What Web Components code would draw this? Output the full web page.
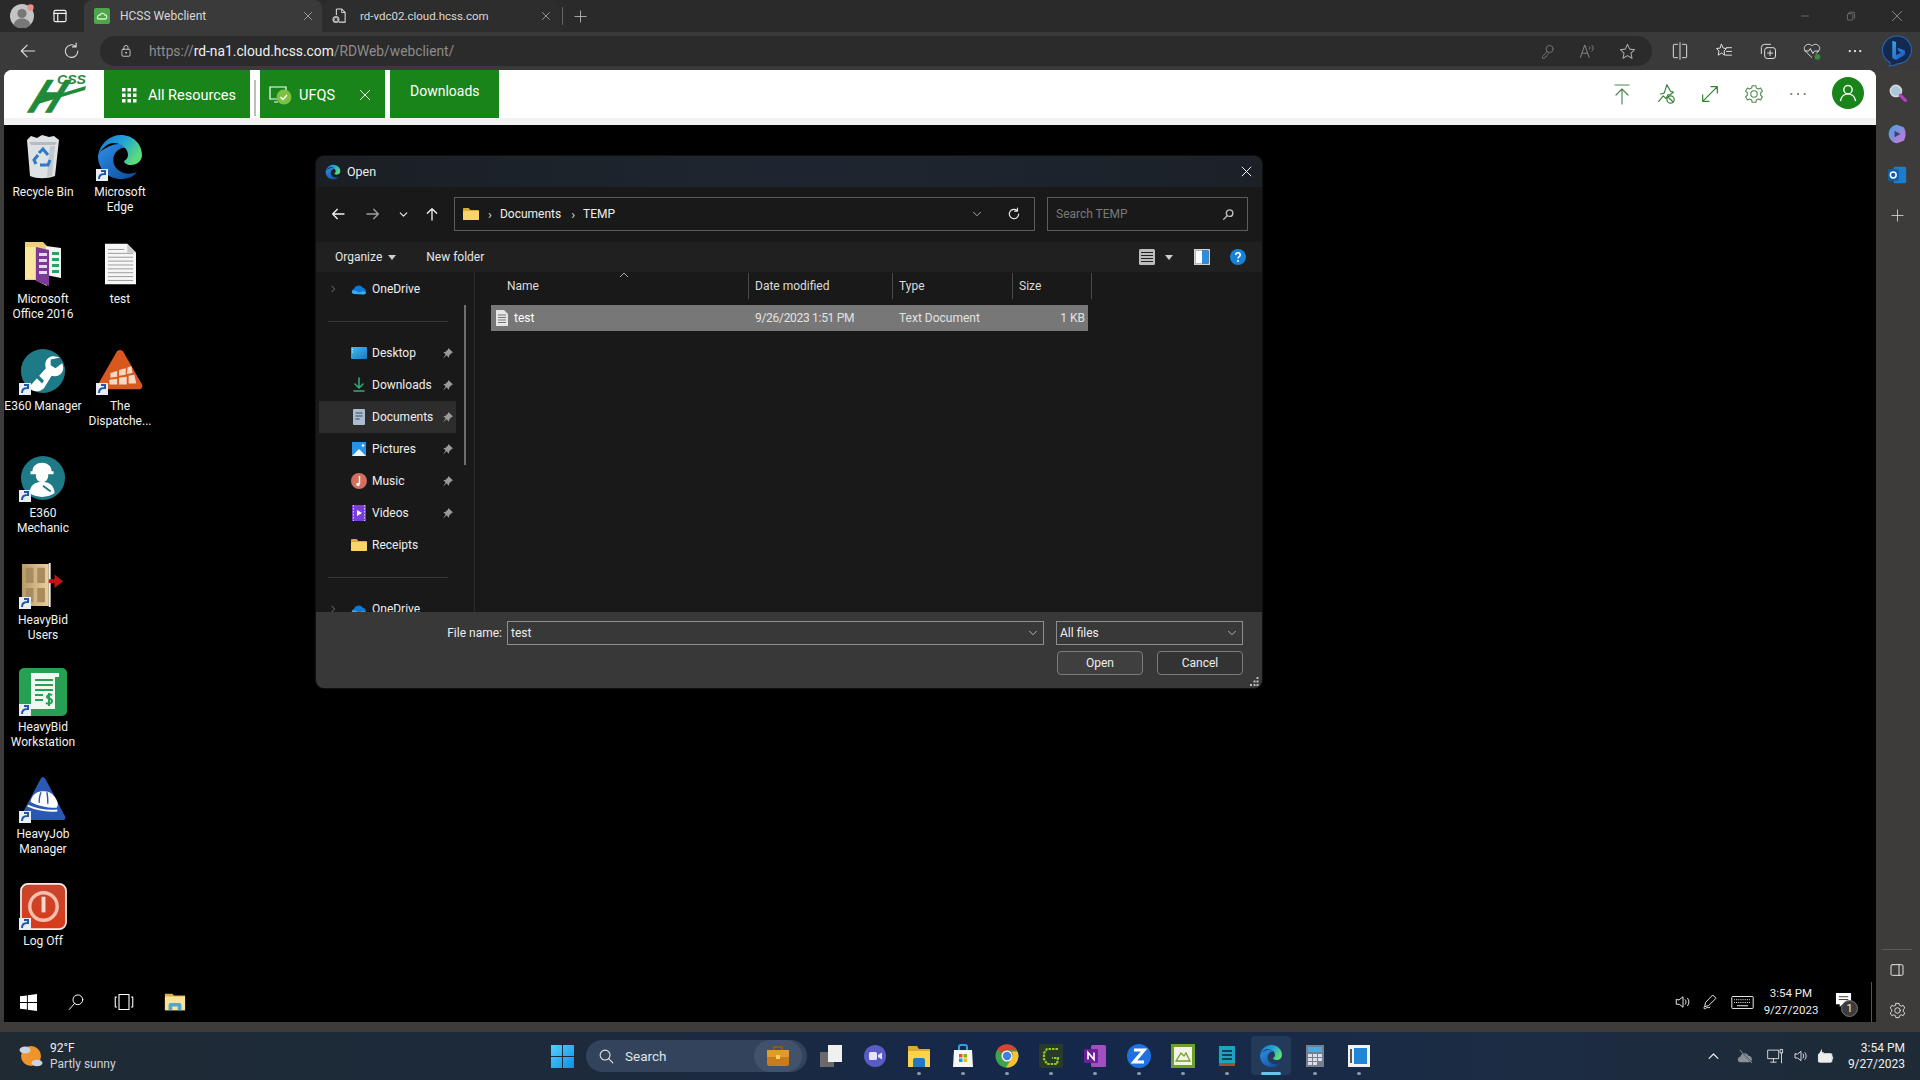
<!DOCTYPE html>
<html lang="en"><head><meta charset="utf-8"><title>HCSS Webclient</title>
<style>
html,body{margin:0;padding:0;width:1920px;height:1080px;overflow:hidden;background:#000;font-family:Roboto,"Liberation Sans",sans-serif}
</style></head><body>
<app-root></app-root>
<script>
const edge=(id)=>`<svg viewBox="0 0 48 48"><defs><linearGradient id="${id}a" x1="0" y1="0" x2="1" y2=".5"><stop offset="0" stop-color="#1678d4"/><stop offset=".55" stop-color="#21a3d8"/><stop offset="1" stop-color="#5bdc7a"/></linearGradient><linearGradient id="${id}b" x1="0" y1="0" x2="1" y2="1"><stop offset="0" stop-color="#2f8fe6"/><stop offset="1" stop-color="#0b4a9c"/></linearGradient></defs><path fill="url(#${id}b)" d="M2 23c0 13 10 23 23 23 7 0 12-2 16-7-7 3-15 2-20-3-5-5-5-13 0-18 3-3 7-4 11-3-4-5-12-5-18-2-6 3-11 5-12 10z"/><path fill="url(#${id}a)" d="M2 23C4 10 14 2 25 2c12 0 21 9 21 20 0 6-5 10-11 10-4 0-7-2-7-4 2-1 4-3 4-6 0-7-7-12-14-12C11 10 5 16 2 23z"/></svg>`;
const s=(d,c='#ddd',w=1.4,vb=24)=>`<svg viewBox="0 0 ${vb} ${vb}" fill="none" stroke="${c}" stroke-width="${w}" stroke-linecap="round" stroke-linejoin="round">${d}</svg>`;
const ICONS={
fold:`<svg viewBox="0 0 16 16"><path fill="#d9a93a" d="M0 3c0-.6.4-1 1-1h4.500l2 2H15c.6 0 1 .4 1 1v8c0 .6-.4 1-1 1H1c-.6 0-1-.4-1-1z"/><path fill="#fbd466" d="M0 6c0-.6.4-1 1-1h14c.6 0 1 .4 1 1v7c0 .6-.4 1-1 1H1c-.6 0-1-.4-1-1z"/></svg>`,
avatar:`<svg viewBox="0 0 24 24"><circle cx="12" cy="12" r="12" fill="#c4c4c4"/><circle cx="12" cy="9.500" r="4.600" fill="#777"/><path fill="#777" d="M3.500 21c1-5 5-6.500 8.500-6.500S19.500 16 20.500 21A12 12 0 0 1 3.500 21z"/><circle cx="20.500" cy="3.500" r="3.200" fill="#e98d8d"/></svg>`,
sidetabs:s('<rect x="4" y="4.500" width="16" height="15" rx="2"/><path d="M4 8.500h16M9 8.500v11"/>','#eee',1.6),
favicon:`<svg viewBox="0 0 16 16"><rect width="16" height="16" rx="2" fill="#4fa54a"/><path fill="none" stroke="#d8f0c8" stroke-width="1.300" d="M4 11c-1.500-2 0-4 2-4 .5-2 4-2.500 5 0 2 0 2.500 3 .5 4z"/></svg>`,
docx:`<svg viewBox="0 0 16 18"><path fill="none" stroke="#ddd" stroke-width="1.200" d="M5 1h6l4 4v11H8M5 1v7"/><path fill="none" stroke="#ddd" d="M11 1v4h4"/><circle cx="4.500" cy="13" r="4" fill="#bbb"/><path stroke="#222" stroke-width="1.200" d="M3 11.500l3 3m0-3l-3 3"/></svg>`,
x:s('<path d="M5 5l14 14M19 5L5 19"/>','#cfcfcf',1.3),
xw:s('<path d="M5 5l14 14M19 5L5 19"/>','#fff',1.5),
plus:s('<path d="M12 3v18M3 12h18"/>','#cfcfcf',1.2),
min:s('<path d="M6 12h12"/>','#8a8a8a',1.1),
restore:s('<rect x="6" y="8" width="9" height="11" rx="1.500"/><path d="M9 5.500h7.500A1.500 1.500 0 0 1 18 7v9"/>','#8a8a8a',1.1),
closew:s('<path d="M4 4l16 16M20 4L4 20"/>','#a8a8a8',1.2),
back:s('<path d="M20 12H4M11 5l-7 7 7 7"/>','#ddd',1.300),
reload:s('<path d="M19 12a7.500 7.500 0 1 1-2.500-5.500M17 2.500v4.500h-4.500"/>','#ddd',1.300),
lock:s('<rect x="5" y="9" width="14" height="12" rx="2"/><path d="M8.500 9V6a3.500 3.500 0 0 1 7 0v3"/><circle cx="12" cy="15" r=".8" fill="#ddd"/>','#ddd',1.400),
key:s('<circle cx="15" cy="8.500" r="5"/><path d="M11.500 12L5 19v2.500h3l1-2h1.500l.5-2 2.500-2.500"/>','#777',1.300),
read:`<svg viewBox="0 0 24 24" fill="none" stroke="#888" stroke-width="1.300"><path d="M3 21L9 4l6 17M5.500 15h7"/><path d="M15 6c1.500 1 1.500 3 0 4M18 4c3 2.500 3 6 0 8.500"/></svg>`,
star:s('<path d="M12 3l2.800 6 6.200.7-4.600 4.300 1.300 6.500L12 17.200 6.300 20.500l1.300-6.500L3 9.700 9.200 9z"/>','#aaa',1.300),
split:s('<path d="M9 4H5a1 1 0 0 0-1 1v14a1 1 0 0 0 1 1h4M15 4h4a1 1 0 0 1 1 1v14a1 1 0 0 1-1 1h-4M12 2v20"/>','#ddd',1.200),
favs:s('<path d="M9 4l2 4.500 4 .5-3 3 1 5-4-2.500L5 17l1-5-3-3 4-.5zM15 8h6M15 12.500h6M14 17h7"/>','#ddd',1.200),
coll:s('<path d="M15 4H8a4 4 0 0 0-4 4v7"/><rect x="8" y="8" width="13" height="13" rx="3"/><path d="M14.500 11.500v6M11.500 14.500h6"/>','#ddd',1.200),
heart:`<svg viewBox="0 0 24 24" fill="none" stroke="#ddd" stroke-width="1.200"><path d="M12 20L4 12C1 8 4 4 8 4c2 0 3 1 4 2 1-1 2-2 4-2 4 0 7 4 4 8l-3 3"/><path d="M3 12h5l2-3 3 6 2-3h5"/><circle cx="18.500" cy="19" r="3.500" fill="#3c8a3c" stroke="none"/></svg>`,
dots:`<svg viewBox="0 0 24 24" fill="#eee"><circle cx="5" cy="12" r="1.500"/><circle cx="12" cy="12" r="1.500"/><circle cx="19" cy="12" r="1.500"/></svg>`,
bing:`<svg viewBox="0 0 32 34"><defs><linearGradient id="bg" x1="0" y1="0" x2="1" y2="1"><stop offset="0" stop-color="#37a8e8"/><stop offset="1" stop-color="#1a4fc4"/></linearGradient></defs><path d="M16 1a15 15 0 0 1 13 23c-2 4-6 6-13 7-3 1-5 2-8 2 1-1 1-3 0-4A15 15 0 0 1 16 1z" fill="#13294f" stroke="#2a63a8" stroke-width="1.200"/><path fill="url(#bg)" d="M11 6l4 1.500v14l5.500-3-2.500-1-1.500-4 8 3v4.500l-9.500 5.500-4-2z"/></svg>`,
grid:`<svg viewBox="0 0 15 15" fill="#fff">${[0,5.5,11].flatMap(x=>[0,5.5,11].map(y=>`<rect x="${x}" y="${y}" width="3.500" height="3.500"/>`)).join('')}</svg>`,
ufqs:`<svg viewBox="0 0 24 20"><path fill="none" stroke="#fff" stroke-width="1.200" d="M8 14H1V2h16v5M5 17h4"/><circle cx="15" cy="12" r="7.500" fill="#7cc044"/><path fill="none" stroke="#fff" stroke-width="1.500" d="M11.500 12l2.500 2.500 4-4.500"/></svg>`,
hUp:s('<path d="M5 3h14M12 7v15M6 13l6-6 6 6"/>','#4f8a4f',1.200),
hPin:s('<path d="M13 2l4 7 3 1-4 3-2 0-2 4-3-3-5 6M6 12l4-1 3-9"/><circle cx="17" cy="18" r="4"/><path d="M14.500 15.500l5 5"/>','#3f7f3f',1.300),
hExp:s('<path d="M4 20L20 4M13 4h7v7M4 13v7h7"/>','#2f862f',1.300),
gear:s('<circle cx="12" cy="12" r="3.500"/><path d="M10 3h4l.6 2.500 2.200 1 2.400-1 2 3.400-1.900 1.700v2.800l1.900 1.700-2 3.400-2.400-1-2.200 1L14 21h-4l-.6-2.500-2.200-1-2.400 1-2-3.400 1.900-1.700v-2.800L2.800 8.900l2-3.400 2.400 1 2.200-1z"/>','#4f8a4f',1.200),
gearw:s('<circle cx="12" cy="12" r="3.500"/><path d="M10 3h4l.6 2.500 2.200 1 2.400-1 2 3.400-1.900 1.700v2.800l1.900 1.700-2 3.400-2.400-1-2.200 1L14 21h-4l-.6-2.500-2.200-1-2.400 1-2-3.400 1.900-1.700v-2.800L2.800 8.900l2-3.400 2.400 1 2.200-1z"/>','#ddd',1.200),
dotsg:`<svg viewBox="0 0 24 24" fill="#4f8a4f"><circle cx="4" cy="12" r="1.300"/><circle cx="12" cy="12" r="1.300"/><circle cx="20" cy="12" r="1.300"/></svg>`,
user:s('<circle cx="12" cy="8" r="5"/><path d="M3 21c1-5 5-8 9-8s8 3 9 8"/>','#fff',1.700),
sMag:`<svg viewBox="0 0 24 24"><circle cx="10" cy="10" r="7" fill="#a9c7d9" stroke="#d8d8d8" stroke-width="2"/><path stroke="#b43fc4" stroke-width="4" stroke-linecap="round" d="M15.500 15.500L22 22"/></svg>`,
sCop:`<svg viewBox="0 0 24 24"><defs><linearGradient id="cp" x1="0" y1="0" x2="1" y2="1"><stop offset="0" stop-color="#3aa8e0"/><stop offset="1" stop-color="#d673d6"/></linearGradient></defs><path fill="url(#cp)" d="M12 1l8 3c3 4 3 12 0 16l-8 3c-5 0-10-5-10-11S7 1 12 1z"/><path fill="#4a3a78" d="M9 8l7 4-7 4z"/></svg>`,
sOut:`<svg viewBox="0 0 24 24"><rect x="8" y="2" width="15" height="20" rx="2" fill="#1e7ccc"/><rect x="1" y="5" width="13" height="14" rx="1" fill="#0f5da8"/><circle cx="7.500" cy="12" r="3.500" fill="none" stroke="#fff" stroke-width="1.800"/></svg>`,
plusw:s('<path d="M12 3v18M3 12h18"/>','#ddd',1.300),
panel:s('<rect x="3" y="4" width="18" height="16" rx="2"/><path d="M15 4v16"/>','#eee',1.400),
winw:`<svg viewBox="0 0 18 18" fill="#fff"><path d="M0 2.500l7.300-1v7H0zM8.300 1.300L18 0v8.500H8.300zM0 9.500h7.300v7L0 15.500zM8.300 9.500H18V18l-9.700-1.300z"/></svg>`,
searchw:s('<circle cx="14.500" cy="9" r="6.500"/><path d="M10 14l-7 8"/>','#fff',1.300),
taskv:s('<rect x="6" y="3" width="12" height="18"/><path d="M3 6H1.500v12H3M21 6h1.500v12H21"/>','#fff',1.300),
explorer:`<svg viewBox="0 0 24 24"><path fill="#d8b04a" d="M1 3h8l2 2h12v16H1z"/><path fill="#fae29a" d="M1 6h22v15H1z"/><path fill="#4fa6cf" d="M5 21v-6c0-1 1-2 2-2h10c1 0 2 1 2 2v6h-4v-4H9v4z"/></svg>`,
vol:s('<path d="M3 9v6h4l5 4V5L7 9zM15 9c1.500 2 1.500 4 0 6M18 7c2.500 3 2.500 7 0 10"/>','#fff',1.200),
pen:s('<path d="M16 3l4 4L10 17l-5 1 1-5zM5 18c-3 3 0 4 2 2 2-2 3 1 5-1"/>','#fff',1.200),
kbd:`<svg viewBox="0 0 24 14" fill="none" stroke="#fff"><rect x=".5" y=".5" width="23" height="13" rx="1"/><path stroke-dasharray="1 1" d="M3 4h18M3 7h18"/><path d="M6 10.500h12"/></svg>`,
note:`<svg viewBox="0 0 18 18"><path fill="#fff" d="M1 1h16v12H8l-3 3v-3H1z"/><path stroke="#333" stroke-width="1" d="M4 5h10M4 8h10"/></svg>`,
weather:`<svg viewBox="0 0 24 24"><circle cx="12" cy="12" r="10" fill="#f0952a"/><ellipse cx="6" cy="6" rx="5.500" ry="3.500" fill="#c9d4e4"/><ellipse cx="18" cy="19" rx="5.500" ry="3.200" fill="#c9d4e4"/></svg>`,
win11:`<svg viewBox="0 0 24 24"><defs><linearGradient id="w11" x1="0" y1="0" x2="1" y2="1"><stop offset="0" stop-color="#52d0fb"/><stop offset="1" stop-color="#0f8fe8"/></linearGradient></defs><path fill="url(#w11)" d="M0 0h11.500v11.500H0zM12.500 0H24v11.500H12.500zM0 12.500h11.500V24H0zM12.500 12.500H24V24H12.500z"/></svg>`,
mag:s('<circle cx="10" cy="10" r="7"/><path d="M15 15l6 6"/>','#e6e6e6',1.500),
brief:`<svg viewBox="0 0 24 24"><rect x="1" y="6" width="22" height="16" rx="2" fill="#c97a1a"/><path fill="none" stroke="#8b5a1a" stroke-width="2" d="M8 6V3h8v3"/><rect x="1" y="6" width="22" height="7" fill="#e49a2a"/><rect x="10" y="11" width="4" height="4" fill="#ffd35a"/></svg>`,
tCopy:`<svg viewBox="0 0 24 24"><rect x="1" y="8" width="14" height="15" fill="#6a6a6a"/><rect x="9" y="1" width="14" height="17" fill="#f0f0f0"/></svg>`,
tMeet:`<svg viewBox="0 0 24 24"><path fill="#5a5bc4" d="M12 1c7 0 11 5 11 11s-4 11-11 11C6 23 1 18 1 12S6 1 12 1z"/><rect x="6" y="8" width="8" height="8" rx="1.500" fill="#e4e4f8"/><path fill="#e4e4f8" d="M15 11l4-2.500v7L15 13z"/></svg>`,
tFold:`<svg viewBox="0 0 24 24"><path fill="#e0a92c" d="M1 2h9l2 3h11v17H1z"/><path fill="#fcd34d" d="M1 7h22v16H1z"/><path fill="#1c7cc0" d="M6 23v-7c0-1 1-2 2-2h8c1 0 2 1 2 2v7z"/></svg>`,
tStore:`<svg viewBox="0 0 24 24"><path fill="none" stroke="#2f9fe0" stroke-width="2" d="M8 6V3c0-1 1-2 2-2h4c1 0 2 1 2 2v3"/><path fill="#f6f6f6" d="M3 6h18l1 17H2z"/><path fill="#f25022" d="M8 10h3.500v3.500H8z"/><path fill="#7fba00" d="M12.500 10H16v3.500h-3.500z"/><path fill="#00a4ef" d="M8 14.500h3.500V18H8z"/><path fill="#ffb900" d="M12.500 14.500H16V18h-3.500z"/></svg>`,
tChrome:`<svg viewBox="0 0 24 24"><circle cx="12" cy="12" r="11.500" fill="#3fa34d"/><path fill="#e0402f" d="M12 .5a11.500 11.500 0 0 1 10 5.800H12a5.700 5.700 0 0 0-5.300 3.400L2.500 5A11.500 11.500 0 0 1 12 .500z"/><path fill="#fbc02d" d="M22.500 7.500A11.500 11.500 0 0 1 11 23.500l5-8a5.700 5.700 0 0 0 .6-8z"/><circle cx="12" cy="12" r="5.500" fill="#fff"/><circle cx="12" cy="12" r="4.200" fill="#3f7fe0"/></svg>`,
tG:`<svg viewBox="0 0 24 24"><rect width="24" height="24" fill="#2a3a2a"/><path fill="none" stroke="#8ecb2a" stroke-width="2.200" stroke-dasharray="2.500 1" d="M19 5H8L5 9v6l3 5h10l1-6h-6"/></svg>`,
tOne:`<svg viewBox="0 0 24 24"><rect x="8" y="1" width="15" height="22" rx="1.500" fill="#a44ec4"/><rect x="1" y="5" width="14" height="14" rx="1" fill="#6a1f96"/><path fill="none" stroke="#fff" stroke-width="1.600" d="M5 15.500v-7l6 7v-7"/></svg>`,
tZ:`<svg viewBox="0 0 24 24"><circle cx="12" cy="12" r="12" fill="#1e72e0"/><path fill="none" stroke="#fff" stroke-width="3.200" d="M7 6h10L7 18h10"/></svg>`,
tCard:`<svg viewBox="0 0 24 24"><rect width="24" height="24" fill="#6fa02e"/><rect x="3" y="3" width="18" height="18" fill="#f4f4e4"/><path fill="none" stroke="#6fa02e" stroke-width="1.300" d="M5 17l5-8 3 3 2-3 4 8z"/></svg>`,
tNote:`<svg viewBox="0 0 24 24"><path fill="#1fa3c4" d="M4 2h16v20H4z"/><path stroke="#123" stroke-width="1.500" d="M7 7h10M7 11h10M7 15h10"/><rect x="4" y="19" width="16" height="3" fill="#a0522d"/></svg>`,
tCalc:`<svg viewBox="0 0 24 24"><rect x="3" y="1" width="18" height="22" fill="#75808a"/><rect x="5" y="3" width="14" height="5" fill="#4aa9df"/><path fill="#dde" d="M5 10h4v3H5zM10 10h4v3h-4zM15 10h4v3h-4zM5 14h4v3H5zM10 14h4v3h-4zM15 14h4v3h-4zM5 18h4v3H5zM10 18h4v3h-4z"/></svg>`,
tWin:`<svg viewBox="0 0 24 24"><rect x="1" y="1" width="22" height="22" fill="#f2f2f2"/><rect x="7" y="4" width="13" height="16" fill="#1f86d8"/><rect x="3" y="5" width="2" height="14" fill="#555"/></svg>`,
netw:s('<rect x="1.500" y="3" width="15" height="12"/><path d="M9 15v5M5 20h8M19 2h3v5h-3zM20.500 7v14"/>','#eee',1.200),
chevU:s('<path d="M5 15l7-7 7 7"/>','#eee',1.900),
cloudoff:`<svg viewBox="0 0 24 24"><path fill="#8a9098" d="M5 20c-5 0-5-7 0-8 1-6 10-6 11-1 6 0 7 9 1 9z"/><path stroke="#1c2b36" stroke-width="2" d="M4 3l17 18"/><path stroke="#d0d0d0" stroke-width="1" d="M4 3l17 18"/></svg>`,
batt:`<svg viewBox="0 0 24 24" fill="none" stroke="#eee" stroke-width="1.300"><rect x="2" y="8" width="19" height="12" rx="1.500" fill="#eee"/><path d="M22 12v4"/><path fill="#eee" stroke="none" d="M7 1L3 8h3l-1 5 5-7H7z"/></svg>`,
nBack:s('<path d="M21 12H4M11 5l-7 7 7 7"/>','#f0f0f0',2),
nFwd:s('<path d="M3 12h17M13 5l7 7-7 7"/>','#a0a0a0',2),
nChev:s('<path d="M6 9l6 6 6-6"/>','#e6e6e6',2.200),
nUp:s('<path d="M12 21V4M5 11l7-7 7 7"/>','#f0f0f0',2),
sm:s('<path d="M6 9l6 6 6-6"/>','#c0c0c0',1.500),
rel:s('<path d="M20 12a8 8 0 1 1-2.500-5.800M18 2v5h-5"/>','#e6e6e6',2),
glass:s('<circle cx="14" cy="9.500" r="6"/><path d="M10 14l-7 7"/>','#bfbfbf',2.600),
view:`<svg viewBox="0 0 16 16"><rect width="16" height="16" rx="1.500" fill="#bdbdbd"/><path stroke="#222" d="M2 3.500h12M2 6.500h12M2 9.500h12M2 12.500h12"/></svg>`,
pane:`<svg viewBox="0 0 16 16"><rect width="16" height="16" fill="#cfd3d8"/><rect x="1.500" y="1.500" width="13" height="13" fill="#111"/><rect x="1.500" y="1.500" width="6.500" height="13" fill="#fff"/><rect x="8" y="1.500" width="6.500" height="13" fill="#2a8ee0"/></svg>`,
help:`<svg viewBox="0 0 16 16"><circle cx="8" cy="8" r="8" fill="#1683d8"/><path fill="none" stroke="#fff" stroke-width="1.600" d="M5.800 6c0-3 4.400-3 4.400 0 0 1.600-2.200 1.600-2.200 3.500"/><circle cx="8" cy="12" r="1" fill="#fff"/></svg>`,
cloud:`<svg viewBox="0 0 16 16"><path fill="#0f7ad6" d="M3.500 13C0 13 0 8.500 3 8c1-4 7-5 9-1 3.500 0 4 6 0 6z"/><path fill="#38aef0" d="M3.500 13c-2 0-3-1.500-2.500-3 3-1 4 0 7 1.500l3-1c2-.5 4 .5 4 1.500-.5 1-1.500 1.500-3 1.500z"/></svg>`,
desk:`<svg viewBox="0 0 16 16"><defs><linearGradient id="dk" x1="0" y1="0" x2="1" y2="1"><stop offset="0" stop-color="#39c0f0"/><stop offset="1" stop-color="#1a78c4"/></linearGradient></defs><rect y="2" width="16" height="12" rx="1" fill="url(#dk)"/><path stroke="#dff" d="M1.500 4v1M1.500 6.500v1"/></svg>`,
down:s('<path d="M8 1v9M4 7l4 4 4-4M3 14h10"/>','#2fae7e',1.500,16),
docs:`<svg viewBox="0 0 16 16"><rect x="2" width="12" height="16" rx="1" fill="#a9bcd0"/><path stroke="#3a4a5a" d="M4.500 4h7M4.500 7h7M4.500 10h4"/></svg>`,
pics:`<svg viewBox="0 0 16 16"><rect x="1" y="1" width="14" height="14" fill="#2a92e4"/><path fill="#e9f6ff" d="M1 15l7-7 7 7z"/><circle cx="12" cy="4.500" r="1.300" fill="#fff"/></svg>`,
music:`<svg viewBox="0 0 16 16"><circle cx="8" cy="8" r="8" fill="#d06f62"/><path fill="none" stroke="#fff" stroke-width="1.400" d="M8.500 3v8"/><circle cx="7" cy="11.500" r="1.700" fill="#fff"/></svg>`,
vids:`<svg viewBox="0 0 16 16"><rect x="1" width="14" height="16" fill="#7a3fd8"/><path fill="#fff" d="M6 5l5 3-5 3z"/><path stroke="#d4c2f8" stroke-dasharray="1.500 1.500" d="M2.500 0v16M13.500 0v16"/></svg>`,
pin:`<svg viewBox="0 0 12 12" fill="#9a9a9a"><path d="M7 0l5 5-1.500.5L8 8l-.5 2.500L5 8 1 11.500 4 7 1.500 4.500 4 4l2.500-2.500z"/></svg>`,
chevR:s('<path d="M9 5l7 7-7 7"/>','#7a7a7a',2.200),
txt:`<svg viewBox="0 0 12 16"><path fill="#e6e6e6" d="M0 0h8l4 4v12H0z"/><path stroke="#777" d="M2 5h8M2 7.500h8M2 10h8M2 12.500h8"/></svg>`,
grip:`<svg viewBox="0 0 9 9" fill="#bbb"><rect x="6.500" y="0" width="2" height="2"/><rect x="3.500" y="3.500" width="2" height="2"/><rect x="6.500" y="3.500" width="2" height="2"/><rect x="0" y="7" width="2" height="2"/><rect x="3.500" y="7" width="2" height="2"/><rect x="6.500" y="7" width="2" height="2"/></svg>`,
edgeA:edge('ea'),edgeB:edge('eb'),edgeC:edge('ec'),
dRecycle:`<svg viewBox="6 2 36 46"><path fill="#dfe2e5" d="M8 8l4-4 6 2 5-3 7 2 5-1 5 4-4 36c-8 3-18 3-25 0z"/><path fill="#b4bbc1" d="M10 10l28 0-2 3H12z"/><path fill="#c3c8cd" d="M36 14l-3 30-5 1 3-31z"/><g fill="none" stroke="#2f79c9" stroke-width="3"><path d="M20 21l4-4 5 6"/><path d="M31 28l-2 5h-8"/><path d="M17 32l-2-4 4-5"/></g></svg>`,
dOffice:`<svg viewBox="5 2 38 46"><path fill="#eccf78" d="M6 3h18l4 4v40l-12-6H6z"/><path fill="#fbe6a0" d="M6 8h10v32H6z"/><path fill="#f4f4f4" d="M27 7l15 2v30l-15-3z"/><path fill="#7a3a96" d="M17 8l13 3v36l-13-5z"/><g fill="#e6d8ee"><path d="M20 14h8v3h-8zM20 20h8v3h-8zM20 26h8v3h-8zM20 32h8v3h-8z"/></g><g fill="#2f9e62"><path d="M33 13h7v3h-7zM33 19h7v3h-7zM33 25h7v3h-7zM33 31h7v3h-7z"/></g></svg>`,
dTxt:`<svg viewBox="0 0 32 42"><path fill="#f6f6f6" d="M0 0h23l9 9v33H0z"/><path fill="#c9c9c9" d="M23 0l9 9h-9z"/><path stroke="#9a9a9a" d="M3 6h17M3 10h26M3 14h26M3 18h26M3 22h26M3 26h26M3 30h26M3 34h26M3 38h26"/></svg>`,
dWrench:`<svg viewBox="0 0 48 48"><circle cx="24" cy="24" r="23" fill="#1e7a86"/><path fill="#fff" d="M42 10c-4-1-9-3-13 1-3 3-3 7-2 10L11 39l-3 1c4 6 12 7 17 2l8-13c4 1 9 0 11-4 2-3 1-6 0-9l-7 5-5-3 0-6z"/><path fill="#1e7a86" d="M18 27l7 7-2 3-7-7z"/></svg>`,
dDisp:`<svg viewBox="0 0 48 48"><path fill="#d9581d" d="M24 2c2 0 3 1 4 3l19 33c1 2 0 5-3 5H4c-3 0-4-3-3-5L20 5c1-2 2-3 4-3z"/><g fill="#f6d9c4"><path d="M14 26l7-2v6l-7 1zM23 23l7-2v7l-7 1zM32 20l-1 7 6-1-1-7zM13 33l8-1v6h-8zM23 31l8-1v8h-8zM33 29l6-1 2 9h-8z"/></g></svg>`,
dMech:`<svg viewBox="0 0 48 48"><circle cx="24" cy="24" r="23" fill="#1e7a86"/><path fill="#fff" d="M13 17c0-6 5-9 10-9s10 3 10 9h2v3H11v-3z"/><circle cx="23" cy="22" r="6.500" fill="#fff"/><path fill="#fff" d="M10 40c0-8 6-12 13-12s13 4 13 12c-8 5-18 5-26 0z"/><path fill="none" stroke="#1e7a86" stroke-width="2" d="M24 32l8 6"/></svg>`,
dDoor:`<svg viewBox="0 0 48 48"><defs><linearGradient id="dr" x1="0" y1="0" x2="1" y2="0"><stop offset="0" stop-color="#b89a68"/><stop offset="1" stop-color="#ecd09c"/></linearGradient></defs><path fill="url(#dr)" d="M2 2h28v44H2z"/><path fill="#a68c5e" d="M6 6h8v16H6zM18 6h8v16h-8zM6 27h8v15H6zM18 27h8v15h-8z"/><path fill="#eee" d="M30 1h2v46h-2z"/><path fill="#c01616" d="M30 18h6v-5l9 7-9 7v-5h-6z"/></svg>`,
dBid:`<svg viewBox="0 0 48 48"><rect width="48" height="48" rx="5" fill="#26a153"/><path fill="#f2f7f2" d="M12 5h28v4h-4v32H12z"/><path fill="none" stroke="#26a153" stroke-width="2" d="M16 12h18M16 17h18M16 22h18M16 27h8M16 32h8"/><path fill="none" stroke="#26a153" stroke-width="2" d="M33 27c-2-1-5 0-5 2s5 1 5 4-4 3-6 2M30 25v13"/></svg>`,
dJob:`<svg viewBox="0 0 48 48"><path fill="#2b58b5" d="M24 1c1 0 2 1 3 3l20 38c1 2 0 4-2 4H3c-2 0-3-2-2-4L21 4c1-2 2-3 3-3z"/><path fill="#fff" d="M11 27c1-7 7-12 14-11 7 0 12 5 14 11 1 4 0 6-2 6-9 0-19-2-26-6z"/><path fill="none" stroke="#2b58b5" stroke-width="1.500" d="M22 17c-2 4-2 8-2 11M28 17c1 4 1 8 1 12"/><path fill="none" stroke="#fff" stroke-width="2" d="M8 31c9 4 20 6 31 5"/></svg>`,
dLog:`<svg viewBox="0 0 48 48"><defs><linearGradient id="lo" x1="0" y1="0" x2="0" y2="1"><stop offset="0" stop-color="#c8462e"/><stop offset="1" stop-color="#d93a1a"/></linearGradient></defs><rect x="1" y="1" width="46" height="46" rx="7" fill="url(#lo)" stroke="#f6ebe7" stroke-width="1.800"/><circle cx="24" cy="24" r="14" fill="none" stroke="#f3bfae" stroke-width="3.500"/><rect x="22" y="14" width="4" height="16" fill="#f6d8cc"/></svg>`,
};
class XIcon extends HTMLElement{connectedCallback(){
  const w=this.getAttribute('w')||16,h=this.getAttribute('h')||w;
  const r=this.shadowRoot||this.attachShadow({mode:'open'});
  r.innerHTML=`<style>:host{display:inline-flex;flex:none;width:${w}px;height:${h}px}svg{width:100%;height:100%;display:block}</style>${ICONS[this.getAttribute('name')]||''}`;
}}
customElements.define('x-icon',XIcon);
function def(tag,html){
  const t=document.createElement('template');t.innerHTML=html;
  customElements.define(tag,class extends HTMLElement{constructor(){super();this.attachShadow({mode:'open'}).appendChild(t.content.cloneNode(true))}});
}

def('browser-tabs',`<style>
:host{display:flex;height:32px;background:#2a2a2a;color:#d8d8d8;font-size:12px;align-items:stretch}
.s{display:flex;align-items:center;justify-content:center;flex:none}
.tab{display:flex;align-items:center;flex:none;width:238px;box-sizing:border-box;border-radius:8px 8px 0 0}
.a{background:#3a3a3a;margin-left:4px;padding-left:10px}
.b{background:#2d2d2d;padding-left:10px;font-size:11.500px}
.t{flex:1;margin-left:10px;white-space:nowrap}
.b .t{margin-left:14px}
.c{width:16px;display:flex;justify-content:center;margin-right:6px}
.sep{width:1px;background:#666;height:18px;align-self:center;margin-left:2px}
.sp{flex:1}
</style>
<div class="s" style="width:40px;padding-left:4px;box-sizing:border-box"><x-icon name="avatar" w="24"></x-icon></div>
<div class="s" style="width:40px"><x-icon name="sidetabs" w="18"></x-icon></div>
<div class="tab a"><x-icon name="favicon" w="16"></x-icon><span class="t">HCSS Webclient</span><span class="c"><x-icon name="x" w="12"></x-icon></span></div>
<div class="tab b"><x-icon name="docx" w="14" h="16"></x-icon><span class="t">rd-vdc02.cloud.hcss.com</span><span class="c"><x-icon name="x" w="12"></x-icon></span></div>
<div class="sep"></div>
<div class="s" style="width:35px"><x-icon name="plus" w="15"></x-icon></div>
<div class="sp"></div>
<div class="s" style="width:46px"><x-icon name="min" w="14"></x-icon></div>
<div class="s" style="width:46px"><x-icon name="restore" w="14"></x-icon></div>
<div class="s" style="width:46px"><x-icon name="closew" w="14"></x-icon></div>`);

def('browser-toolbar',`<style>
:host{display:flex;height:38px;background:#3a3a3a;align-items:center;font-size:13.800px}
.s{display:flex;align-items:center;justify-content:center;flex:none;height:38px}
.addr{display:flex;align-items:center;width:1552px;margin-left:6px;height:30px;border-radius:15px;background:#2b2b2b;flex:none;color:#8d8d8d;white-space:nowrap}
.addr b{font-weight:400;color:#f0f0f0}
.u{flex:1;margin-left:-3px}
</style>
<div class="s" style="width:50px;padding-left:6px;box-sizing:border-box"><x-icon name="back" w="20"></x-icon></div>
<div class="s" style="width:44px"><x-icon name="reload" w="20"></x-icon></div>
<div class="addr">
<div class="s" style="width:52px"><x-icon name="lock" w="14" h="16"></x-icon></div>
<span class="u">https://<b>rd-na1.cloud.hcss.com</b>/RDWeb/webclient/</span>
<div class="s" style="width:40px"><x-icon name="key" w="17"></x-icon></div>
<div class="s" style="width:40px"><x-icon name="read" w="18"></x-icon></div>
<div class="s" style="width:40px"><x-icon name="star" w="19"></x-icon></div>
<div style="width:5px"></div>
</div>
<div class="s" style="width:44px;margin-left:6px"><x-icon name="split" w="20"></x-icon></div>
<div class="s" style="width:44px"><x-icon name="favs" w="20"></x-icon></div>
<div class="s" style="width:44px"><x-icon name="coll" w="20"></x-icon></div>
<div class="s" style="width:44px"><x-icon name="heart" w="20"></x-icon></div>
<div class="s" style="width:42px"><x-icon name="dots" w="18"></x-icon></div>
<div class="s" style="width:42px"><x-icon name="bing" w="30" h="32"></x-icon></div>`);

def('hcss-header',`<style>
:host{display:flex;flex-direction:column;height:55px;background:#f2f2f2;border-radius:8px 8px 0 0;overflow:hidden;flex:none}
.bar{display:flex;height:48px;background:#fff;align-items:stretch;color:#fff;font-size:14.500px}
.logo{width:100px;flex:none}
.logo svg{width:62px;height:46px;margin:1px 0 0 22px;display:block;overflow:visible}
.g{background:#198419;display:flex;align-items:center;flex:none;white-space:nowrap;padding-top:2px}
.sep{width:2px;height:36px;background:#bdbdbd;align-self:center;margin:0 4px;flex:none;transform:translateY(4px)}
.sp{flex:1}
.s{display:flex;align-items:center;justify-content:center;width:44px;flex:none}
.av{width:32px;height:32px;border-radius:50%;background:#198419;display:flex;align-items:center;justify-content:center;align-self:center;margin:0 12px;flex:none;transform:translateY(-1px)}
</style>
<div class="bar">
<div class="logo"><svg viewBox="0 0 62 46"><g fill="#1f8a3a"><text transform="translate(1 41) skewX(-24)" stroke="#1f8a3a" stroke-width="1.300" font-family="Liberation Sans" font-style="italic" font-weight="700" font-size="46" textLength="29" lengthAdjust="spacingAndGlyphs">H</text><path d="M10 30L60 15l-1 4-47 14z"/><text x="31" y="13" font-family="Liberation Sans" font-style="italic" font-weight="700" font-size="12.500" textLength="29" lengthAdjust="spacingAndGlyphs">CSS</text></g></svg></div>
<div class="g" style="width:146px;padding-left:18px;box-sizing:border-box"><x-icon name="grid" w="15"></x-icon><span style="margin-left:11px">All Resources</span></div>
<div class="sep"></div>
<div class="g" style="width:125px;padding-left:9px;box-sizing:border-box"><x-icon name="ufqs" w="24" h="20"></x-icon><span style="margin-left:6px">UFQS</span><span style="margin-left:22px;display:flex"><x-icon name="xw" w="16"></x-icon></span></div>
<div class="g" style="width:109px;margin-left:5px;padding:0 0 6px 20px;box-sizing:border-box;font-size:14px">Downloads</div>
<div class="sp"></div>
<div class="s"><x-icon name="hUp" w="24"></x-icon></div>
<div class="s"><x-icon name="hPin" w="22"></x-icon></div>
<div class="s"><x-icon name="hExp" w="22"></x-icon></div>
<div class="s"><x-icon name="gear" w="22"></x-icon></div>
<div class="s"><x-icon name="dotsg" w="20"></x-icon></div>
<div class="av"><x-icon name="user" w="20"></x-icon></div>
</div>`);

def('desktop-icon',`<style>
:host{display:block;width:77px;color:#f2f2f2;font-size:12px;line-height:15px}
.box{position:relative;width:48px;height:48px;margin:3px auto 4px;display:flex;align-items:center;justify-content:center}
.sc{position:absolute;left:0;bottom:0;width:12px;height:12px;background:#e9eef4;display:none;align-items:center;justify-content:center}
:host([sc]) .sc{display:flex}
.sc svg{width:10px;height:10px}
.l{display:flex;justify-content:center;text-align:center;white-space:nowrap}
</style><div class="box"><slot name="i"></slot><div class="sc"><svg viewBox="0 0 10 10" fill="none" stroke="#2456a8" stroke-width="2"><path d="M2 9c0-3 1-5 5-5M4 1h4v4"/></svg></div></div><div class="l"><span><slot></slot></span></div>`);

def('desktop-grid',`<style>:host{display:grid;grid-auto-flow:row;grid-template-rows:repeat(8,107px);grid-template-columns:77px 77px;position:absolute;left:0.500px;top:5px}</style><slot></slot>`);

def('nav-item',`<style>
:host{display:flex;align-items:center;height:32px;width:137px;margin-left:3px;box-sizing:border-box;padding-left:9px;color:#efefef;font-size:12px;flex:none}
:host([sel]){background:#2d2d2d}
.c{width:10px;margin-right:13px;display:flex;flex:none}
.t{flex:1;margin-left:5px;white-space:nowrap}
.p{display:flex;margin-right:2px;width:12px}
</style><span class="c"><slot name="chev"></slot></span><slot name="i"></slot><span class="t"><slot></slot></span><span class="p"><slot name="pin"></slot></span>`);

def('file-dialog',`<style>
:host{display:flex;flex-direction:column;position:absolute;left:312px;top:31px;width:946px;height:532px;border-radius:8px;overflow:hidden;background:#191919;color:#eee;font-size:12px;box-shadow:0 0 0 1px #111}
.title{height:31px;flex:none;background:linear-gradient(90deg,#1b1f24,#1d2630 50%,#1c2128);display:flex;align-items:center;padding-left:9px;font-size:12.500px}
.title span{margin-left:6px;flex:1}
.title i{display:flex;width:30px;justify-content:center;margin-right:1px}
.addr{height:55px;flex:none;display:flex;align-items:center;box-sizing:border-box;padding-bottom:1px}
.ns{display:flex;justify-content:center;flex:none}
.box{display:flex;align-items:center;height:34px;box-sizing:border-box;border:1px solid #5c5c5c;flex:none}
.crumb{width:581px;margin-left:2px;padding-left:8px}
.crumb span{white-space:nowrap}
.gt{color:#ddd;margin:0 8px 0 9px;font-size:13px}
.gt2{color:#ddd;margin:0 8px 0 10px;font-size:13px}
.search{width:201px;margin-left:12px;padding-left:8px;color:#7a7a7a}
.cmd{height:30px;flex:none;background:#202020;display:flex;align-items:center;padding-left:19px;color:#e6e6e6}
.tri{width:0;height:0;border:4px solid transparent;border-top:5px solid #cfcfcf;border-bottom:0;display:inline-block}
.body{flex:1;display:flex;min-height:0}
.nav{width:159px;flex:none;border-right:1px solid #2c2c2c;position:relative;overflow:hidden;display:flex;flex-direction:column;padding-top:1px;box-sizing:border-box}
.line{height:32px;flex:none;display:flex;align-items:center;padding-left:12px}
.line div{width:120px;height:1px;background:#363636}
.scroll{position:absolute;left:148px;top:33px;width:2px;height:160px;background:#6e6e6e}
.list{flex:1;padding-left:16px}
.hd,.row{display:grid;align-items:center}
.hd{height:32px;color:#dcdcdc;width:601px;grid-template-columns:258px 144px 120px 79px;position:relative}
.hd div{height:26px;margin-top:-4px;line-height:26px;border-right:1px solid #4a4a4a;padding-left:6px;box-sizing:border-box;white-space:nowrap}
.hd div:first-child{padding-left:16px}
.caret{position:absolute;left:128px;top:-1px;border:0;width:10px;height:8px}
.row{height:26px;margin-top:1px;background:#777;color:#e2e2e2;width:597px;box-sizing:border-box;grid-template-columns:258px 144px 120px 75px}
.row>span{padding-left:6px;white-space:nowrap}
.dt{letter-spacing:-.3px}
.n{display:flex;align-items:center;padding-left:5px!important;color:#fff}
.n b{font-weight:400;margin-left:6px}
.r{text-align:right;padding-right:3px}
.foot{height:76px;flex:none;background:#383838;position:relative;color:#eee;box-sizing:border-box;padding-top:9px}
.fr{display:flex;align-items:center;justify-content:flex-end;padding-right:19px}
.fld{height:24px;box-sizing:border-box;border:1px solid #8e8e8e;display:flex;align-items:center;padding-left:3px;flex:none}
.fld span{flex:1}
.fld i{display:flex;margin-right:3px}
.btns{display:flex;justify-content:flex-end;padding-right:19px;gap:14px;margin-top:6px}
.btn{width:86px;height:24px;box-sizing:border-box;border:1px solid #7c7c7c;border-radius:4px;display:flex;align-items:center;justify-content:center;background:#3f3f3f}
.btn.c{background:#333}
.grip{position:absolute;right:3px;bottom:2px;display:flex}
</style>
<div class="title"><x-icon name="edgeC" w="16"></x-icon><span>Open</span><i><x-icon name="xw" w="15"></x-icon></i></div>
<div class="addr">
<div class="ns" style="width:28px;margin-left:8px"><x-icon name="nBack" w="16"></x-icon></div>
<div class="ns" style="width:42px"><x-icon name="nFwd" w="16"></x-icon></div>
<div class="ns" style="width:18px"><x-icon name="nChev" w="13"></x-icon></div>
<div class="ns" style="width:40px"><x-icon name="nUp" w="16"></x-icon></div>
<div class="box crumb"><x-icon name="fold" w="16"></x-icon><span class="gt">›</span><span>Documents</span><span class="gt2">›</span><span>TEMP</span>
<span style="flex:1"></span><span class="ns" style="width:14px"><x-icon name="sm" w="14"></x-icon></span><span class="ns" style="width:46px;margin-left:7px;margin-right:-3px"><x-icon name="rel" w="14"></x-icon></span></div>
<div class="box search"><span style="flex:1">Search TEMP</span><span class="ns" style="margin-right:12px"><x-icon name="glass" w="13"></x-icon></span></div>
</div>
<div class="cmd"><span>Organize</span><span class="tri" style="margin-left:6px"></span><span style="margin-left:30px">New folder</span><span style="flex:1"></span><x-icon name="view" w="16"></x-icon><span class="tri" style="margin-left:10px"></span><span style="width:21px"></span><x-icon name="pane" w="16"></x-icon><span style="width:20px"></span><x-icon name="help" w="16"></x-icon><span style="width:16px"></span></div>
<div class="body">
<div class="nav">
<nav-item><x-icon slot="chev" name="chevR" w="10"></x-icon><x-icon slot="i" name="cloud" w="16"></x-icon>OneDrive</nav-item>
<div class="line"><div></div></div>
<nav-item><x-icon slot="i" name="desk" w="16"></x-icon>Desktop<x-icon slot="pin" name="pin" w="11"></x-icon></nav-item>
<nav-item><x-icon slot="i" name="down" w="16"></x-icon>Downloads<x-icon slot="pin" name="pin" w="11"></x-icon></nav-item>
<nav-item sel><x-icon slot="i" name="docs" w="16"></x-icon>Documents<x-icon slot="pin" name="pin" w="11"></x-icon></nav-item>
<nav-item><x-icon slot="i" name="pics" w="16"></x-icon>Pictures<x-icon slot="pin" name="pin" w="11"></x-icon></nav-item>
<nav-item><x-icon slot="i" name="music" w="16"></x-icon>Music<x-icon slot="pin" name="pin" w="11"></x-icon></nav-item>
<nav-item><x-icon slot="i" name="vids" w="16"></x-icon>Videos<x-icon slot="pin" name="pin" w="11"></x-icon></nav-item>
<nav-item><x-icon slot="i" name="fold" w="16"></x-icon>Receipts</nav-item>
<div class="line"><div></div></div>
<nav-item><x-icon slot="chev" name="chevR" w="10"></x-icon><x-icon slot="i" name="cloud" w="16"></x-icon>OneDrive</nav-item>
<div class="scroll"></div>
</div>
<div class="list">
<div class="hd"><div>Name</div><div>Date modified</div><div>Type</div><div>Size</div><svg class="caret" viewBox="0 0 10 8" fill="none" stroke="#aaa"><path d="M1 6l4-4 4 4"/></svg></div>
<div class="row"><span class="n"><x-icon name="txt" w="12" h="16"></x-icon><b>test</b></span><span class="dt">9/26/2023 1:51 PM</span><span>Text Document</span><span class="r">1 KB</span></div>
</div>
</div>
<div class="foot">
<div class="fr"><span style="margin-right:5px">File name:</span><div class="fld" style="width:537px"><span>test</span><i><x-icon name="sm" w="14"></x-icon></i></div><div class="fld" style="width:187px;margin-left:12px"><span>All files</span><i><x-icon name="sm" w="14"></x-icon></i></div></div>
<div class="btns"><div class="btn">Open</div><div class="btn c">Cancel</div></div>
<div class="grip"><x-icon name="grip" w="9"></x-icon></div>
</div>`);

def('remote-taskbar',`<style>
:host{display:flex;height:40px;flex:none;align-items:center;color:#eee;font-size:12px;position:absolute;left:0;right:0;bottom:0}
.s{display:flex;align-items:center;justify-content:center;flex:none;height:40px}
.sp{flex:1}
.clk{width:60px;text-align:center;line-height:17px;margin-right:4px;flex:none;white-space:nowrap;font-size:11.500px}
.div{width:1px;height:40px;background:#555;margin:0 4px 0 6px;flex:none}
.n{position:relative;width:40px;justify-content:flex-start;padding-left:10px;box-sizing:border-box}
.bd{position:absolute;left:16px;top:18px;width:17px;height:17px;border-radius:50%;background:#3c3c3c;border:1px solid #777;box-sizing:border-box;color:#eee;font-size:11px;line-height:15px;text-align:center}
</style>
<div class="s" style="width:48px"><x-icon name="winw" w="17"></x-icon></div>
<div class="s" style="width:48px"><x-icon name="searchw" w="18"></x-icon></div>
<div class="s" style="width:48px"><x-icon name="taskv" w="20"></x-icon></div>
<div class="s" style="width:54px"><x-icon name="explorer" w="22"></x-icon></div>
<div class="sp"></div>
<div class="s" style="width:28px"><x-icon name="vol" w="18"></x-icon></div>
<div class="s" style="width:26px"><x-icon name="pen" w="18"></x-icon></div>
<div class="s" style="width:38px"><x-icon name="kbd" w="23" h="13"></x-icon></div>
<div class="clk">3:54 PM<br>9/27/2023</div>
<div class="s n"><x-icon name="note" w="17" style="margin-top:-4px"></x-icon><span class="bd">1</span></div>
<div class="div"></div>`);

def('remote-pane',`<style>
:host{display:flex;flex-direction:column;width:1872px;flex:none;height:952px}
.d{position:relative;flex:1;background:#000;overflow:hidden}
</style><slot name="h"></slot><div class="d"><slot></slot></div>`);

def('edge-sidebar',`<style>
:host{display:flex;flex-direction:column;width:44px;flex:none;padding:2px 2px 0 0;box-sizing:border-box;height:100%}
.s{height:41px;display:flex;align-items:center;justify-content:center;flex:none}
.sp{flex:1}
.top{border-top:1px solid #5a5a5a;margin:0 6px;height:40px}
</style>
<div class="s"><x-icon name="sMag" w="19"></x-icon></div>
<div class="s"><x-icon name="sCop" w="20"></x-icon></div>
<div class="s"><x-icon name="sOut" w="20"></x-icon></div>
<div class="s"><x-icon name="plusw" w="15"></x-icon></div>
<div class="sp"></div>
<div class="s top"><x-icon name="panel" w="16"></x-icon></div>
<div class="s" style="height:40px;margin-bottom:2px"><x-icon name="gearw" w="19"></x-icon></div>`);

def('task-btn',`<style>
:host{display:flex;width:44px;height:48px;flex:none;align-items:center;justify-content:center;position:relative}
:host([run])::after{content:"";position:absolute;left:20px;bottom:5px;width:4px;height:3px;border-radius:2px;background:#8a97a6}
:host([act]) .bg{position:absolute;left:2px;right:2px;top:4px;bottom:5px;background:#243a5a;border-radius:4px}
:host([act])::after{content:"";position:absolute;left:12px;bottom:5px;width:20px;height:3px;border-radius:2px;background:#6cc4f0}
::slotted(*){position:relative}
</style><div class="bg"></div><slot></slot>`);

def('win-taskbar',`<style>
:host{display:flex;height:48px;flex:none;background:linear-gradient(90deg,#1f2a33 0,#1c2a3e 35%,#14284c 55%,#1c2c42 80%,#1e2a35 100%);align-items:center;color:#f0f0f0;font-size:12px;overflow:hidden}
.w{width:551px;flex:none;display:flex;align-items:center;padding-left:19px;box-sizing:border-box}
.wt{margin-left:7px;line-height:16px;white-space:nowrap}
.wt small{color:#cfd4d8;font-size:12px}
.pill{width:221px;height:32px;border-radius:16px;background:#33435c;margin:0 2px 0 12px;display:flex;align-items:center;padding-left:12px;box-sizing:border-box;flex:none;color:#dfe3e8;font-size:13.500px}
.pill span{margin-left:10px;flex:1}
.bf{width:48px;height:32px;border-radius:16px;background:#42526a;display:flex;align-items:center;justify-content:center;margin-right:5px}
.sp{flex:1}
.s{display:flex;align-items:center;justify-content:center;flex:none;height:48px}
.clk{width:68px;text-align:right;line-height:16px;margin-right:15px;flex:none;white-space:nowrap}
</style>
<div class="w"><x-icon name="weather" w="24"></x-icon><div class="wt">92°F<br><small>Partly sunny</small></div></div>
<x-icon name="win11" w="23"></x-icon>
<div class="pill"><x-icon name="mag" w="17"></x-icon><span>Search</span><div class="bf"><x-icon name="brief" w="24"></x-icon></div></div>
<task-btn><x-icon name="tCopy" w="24"></x-icon></task-btn>
<task-btn><x-icon name="tMeet" w="24"></x-icon></task-btn>
<task-btn run><x-icon name="tFold" w="24"></x-icon></task-btn>
<task-btn run><x-icon name="tStore" w="24"></x-icon></task-btn>
<task-btn run><x-icon name="tChrome" w="24"></x-icon></task-btn>
<task-btn run><x-icon name="tG" w="24"></x-icon></task-btn>
<task-btn run><x-icon name="tOne" w="24"></x-icon></task-btn>
<task-btn run><x-icon name="tZ" w="24"></x-icon></task-btn>
<task-btn run><x-icon name="tCard" w="24"></x-icon></task-btn>
<task-btn run><x-icon name="tNote" w="24"></x-icon></task-btn>
<task-btn act><x-icon name="edgeB" w="24"></x-icon></task-btn>
<task-btn run><x-icon name="tCalc" w="24"></x-icon></task-btn>
<task-btn run><x-icon name="tWin" w="24"></x-icon></task-btn>
<div class="sp"></div>
<div class="s" style="width:32px"><x-icon name="chevU" w="15"></x-icon></div>
<div class="s" style="width:32px"><x-icon name="cloudoff" w="17"></x-icon></div>
<div class="s" style="width:28px"><x-icon name="netw" w="17"></x-icon></div>
<div class="s" style="width:24px"><x-icon name="vol" w="16"></x-icon></div>
<div class="s" style="width:24px"><x-icon name="batt" w="17"></x-icon></div>
<div class="clk">3:54 PM<br>9/27/2023</div>`);

const icons=[['Recycle Bin','dRecycle',38,46,0],['Microsoft<br>Edge','edgeA',48,48,1],['Microsoft<br>Office 2016','dOffice',38,46,0],['test','dTxt',31,42,0],['E360 Manager','dWrench',46,46,1],['The<br>Dispatche...','dDisp',46,46,1],['E360<br>Mechanic','dMech',46,46,1],null,['HeavyBid<br>Users','dDoor',46,46,1],null,['HeavyBid<br>Workstation','dBid',48,48,1],null,['HeavyJob<br>Manager','dJob',48,46,1],null,['Log Off','dLog',47,47,1],null];
const deskHTML=icons.map(i=>i?`<desktop-icon ${i[4]?'sc':''}><x-icon slot="i" name="${i[1]}" w="${i[2]}" h="${i[3]}"></x-icon>${i[0]}</desktop-icon>`:'<div></div>').join('');
def('app-root',`<style>
:host{display:flex;flex-direction:column;width:1920px;height:1080px;overflow:hidden}
.main{flex:1;display:flex;background:#3d3c3b;min-height:0}
.gut{width:4px;flex:none}
.col{display:flex;flex-direction:column;width:1872px;flex:none}
</style>
<browser-tabs></browser-tabs><browser-toolbar></browser-toolbar>
<div class="main"><div class="gut"></div><div class="col"><remote-pane><hcss-header slot="h"></hcss-header>
<desktop-grid>${deskHTML}</desktop-grid><file-dialog></file-dialog><remote-taskbar></remote-taskbar></remote-pane></div><edge-sidebar></edge-sidebar></div>
<win-taskbar></win-taskbar>`);
</script>
</body></html>
